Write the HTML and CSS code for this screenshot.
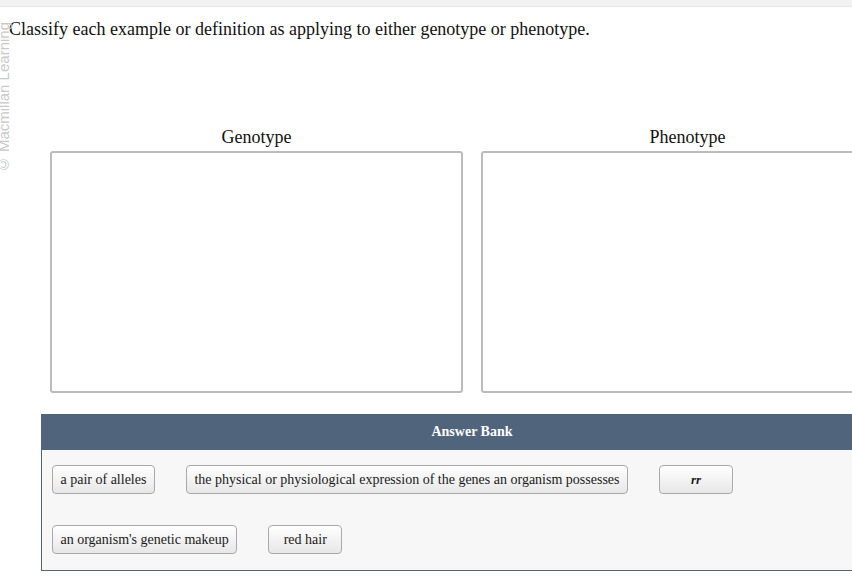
FILE: index.html
```html
<!DOCTYPE html>
<html>
<head>
<meta charset="utf-8">
<link rel="stylesheet" href="styles.css">
</head>
<body>
<div class="topbar"></div>
<div class="watermark">© Macmillan Learning</div>
<main class="page">
  <p class="prompt">Classify each example or definition as applying to either genotype or phenotype.</p>
  <div class="bins">
    <section class="bin">
      <h2 class="bin-title">Genotype</h2>
      <div class="drop"></div>
    </section>
    <section class="bin">
      <h2 class="bin-title">Phenotype</h2>
      <div class="drop"></div>
    </section>
  </div>
  <section class="bank">
    <h3 class="bank-head">Answer Bank</h3>
    <div class="bank-body">
      <span class="chip">a pair of alleles</span>
      <span class="chip">the physical or physiological expression of the genes an organism possesses</span>
      <span class="chip"><i class="ital">rr</i></span>
      <span class="chip">an organism's genetic makeup</span>
      <span class="chip">red hair</span>
    </div>
  </section>
</main>
</body>
</html>
```
FILE: styles.css
```css
html, body {
  margin: 0;
  padding: 0;
}
body {
  width: 852px;
  height: 585px;
  overflow: hidden;
  background: #fff;
  position: relative;
  font-family: "Liberation Serif", "Times New Roman", serif;
  color: #111;
}
.topbar {
  height: 6px;
  background: #f2f2f2;
  border-bottom: 1px solid #e8e8e8;
}
.watermark {
  position: absolute;
  left: -4px;
  top: 22px;
  writing-mode: vertical-rl;
  transform: rotate(180deg);
  font-family: "Liberation Sans", Arial, sans-serif;
  font-size: 15px;
  line-height: 15px;
  color: #c9c9c9;
  white-space: nowrap;
}
.page {
  width: 903px;
}
.prompt {
  margin: 12px 0 0 9px;
  font-size: 18px;
  line-height: 20px;
  white-space: nowrap;
}
.bins {
  display: grid;
  grid-template-columns: 413px 413px;
  column-gap: 18px;
  margin: 88px 0 0 50px;
}
.bin-title {
  margin: 0 0 4px;
  font-size: 18px;
  line-height: 20px;
  font-weight: normal;
  text-align: center;
}
.drop {
  height: 238px;
  border: 2px solid #bcbcbc;
  border-radius: 3px;
  background: #fff;
}
.bank {
  margin: 21px 0 0 41px;
  width: 862px;
}
.bank-head {
  margin: 0;
  height: 36px;
  line-height: 36px;
  background: #50647c;
  color: #fff;
  font-size: 14px;
  font-weight: bold;
  text-align: center;
}
.bank-body {
  display: flex;
  flex-wrap: wrap;
  gap: 31px 31px;
  padding: 15px 10px 16px 10px;
  background: #f7f7f7;
  border-left: 1px solid #50647c;
  border-bottom: 1px solid #50647c;
}
.chip {
  box-sizing: border-box;
  height: 29px;
  min-width: 74px;
  padding: 0 7.5px;
  border: 1px solid #aaaaaa;
  border-radius: 4px;
  background: linear-gradient(#ffffff, #e7e7e7);
  font-size: 14px;
  line-height: 27px;
  color: #1a1a1a;
  text-align: center;
  white-space: nowrap;
}
.ital {
  font-size: 13px;
  font-weight: bold;
}
```
